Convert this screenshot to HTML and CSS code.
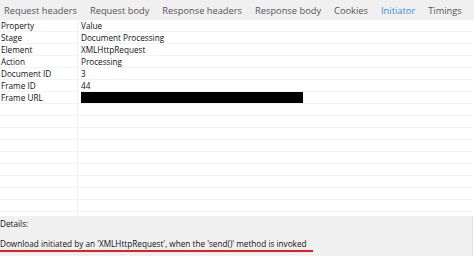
FILE: index.html
```html
<!DOCTYPE html>
<html lang="en">
<head>
  <meta charset="UTF-8">
  <title>Initiator</title>
  <link rel="stylesheet" href="styles.css">
</head>
<body>

  <div class="tabs">
    <span class="tab">Request headers</span>
    <span class="tab">Request body</span>
    <span class="tab">Response headers</span>
    <span class="tab">Response body</span>
    <span class="tab">Cookies</span>
    <span class="tab active">Initiator</span>
    <span class="tab">Timings</span>
  </div>

  <div class="grid">
    <table class="props">
      <tr><td class="key">Property</td><td>Value</td></tr>
      <tr><td class="key">Stage</td><td>Document Processing</td></tr>
      <tr><td class="key">Element</td><td>XMLHttpRequest</td></tr>
      <tr><td class="key">Action</td><td>Processing</td></tr>
      <tr><td class="key">Document ID</td><td>3</td></tr>
      <tr><td class="key">Frame ID</td><td>44</td></tr>
      <tr><td class="key">Frame URL</td><td><div class="redacted"></div></td></tr>
      <tr><td class="key"></td><td></td></tr>
      <tr><td class="key"></td><td></td></tr>
      <tr><td class="key"></td><td></td></tr>
      <tr><td class="key"></td><td></td></tr>
      <tr><td class="key"></td><td></td></tr>
      <tr><td class="key"></td><td></td></tr>
      <tr><td class="key"></td><td></td></tr>
      <tr><td class="key"></td><td></td></tr>
      <tr><td class="key"></td><td></td></tr>
      <tr><td class="key"></td><td></td></tr>
    </table>
  </div>

  <div class="details">
    <div class="details-label">Details:</div>
    <div class="details-text">Download initiated by an 'XMLHttpRequest', when the 'send()' method is invoked</div>
  </div>

</body>
</html>
```

FILE: styles.css
```css
body {
  margin: 0;
  font-family: 'Open Sans', 'Noto Sans', sans-serif;
  font-size: 8.2px;
  color: #111;
  background: #fff;
  width: 474px;
  height: 256px;
  overflow: hidden;
}

.tabs {
  height: 20px;
  background: #f0f0f0;
  display: flex;
  align-items: center;
  gap: 13px;
  padding-left: 4px;
}

.tab {
  color: #555;
  font-size: 9.3px;
  white-space: nowrap;
}

.tab.active {
  color: #3a8ed4;
}

.grid {
  height: 196px;
  overflow: hidden;
}

.props {
  width: 472px;
  border-collapse: collapse;
}

.props td {
  height: 11px;
  padding: 0 0 0 1px;
  line-height: 11px;
  border-bottom: 1px solid #f3f3f3;
  white-space: nowrap;
}

.props td.key {
  width: 76px;
  border-right: 1px solid #f0f0f0;
}

.props td + td {
  padding-left: 3px;
}

.redacted {
  width: 222px;
  height: 11px;
  background: #000;
}

.details {
  height: 40px;
  background: #f0f0f0;
  border-right: 1px solid #e2e2e2;
  width: 472px;
}

.details-label {
  padding-top: 2px;
  line-height: 12px;
}

.details-text {
  margin-top: 7px;
  display: inline-block;
  line-height: 13px;
  padding-right: 6px;
  border-bottom: 2px solid #e02020;
}
```
